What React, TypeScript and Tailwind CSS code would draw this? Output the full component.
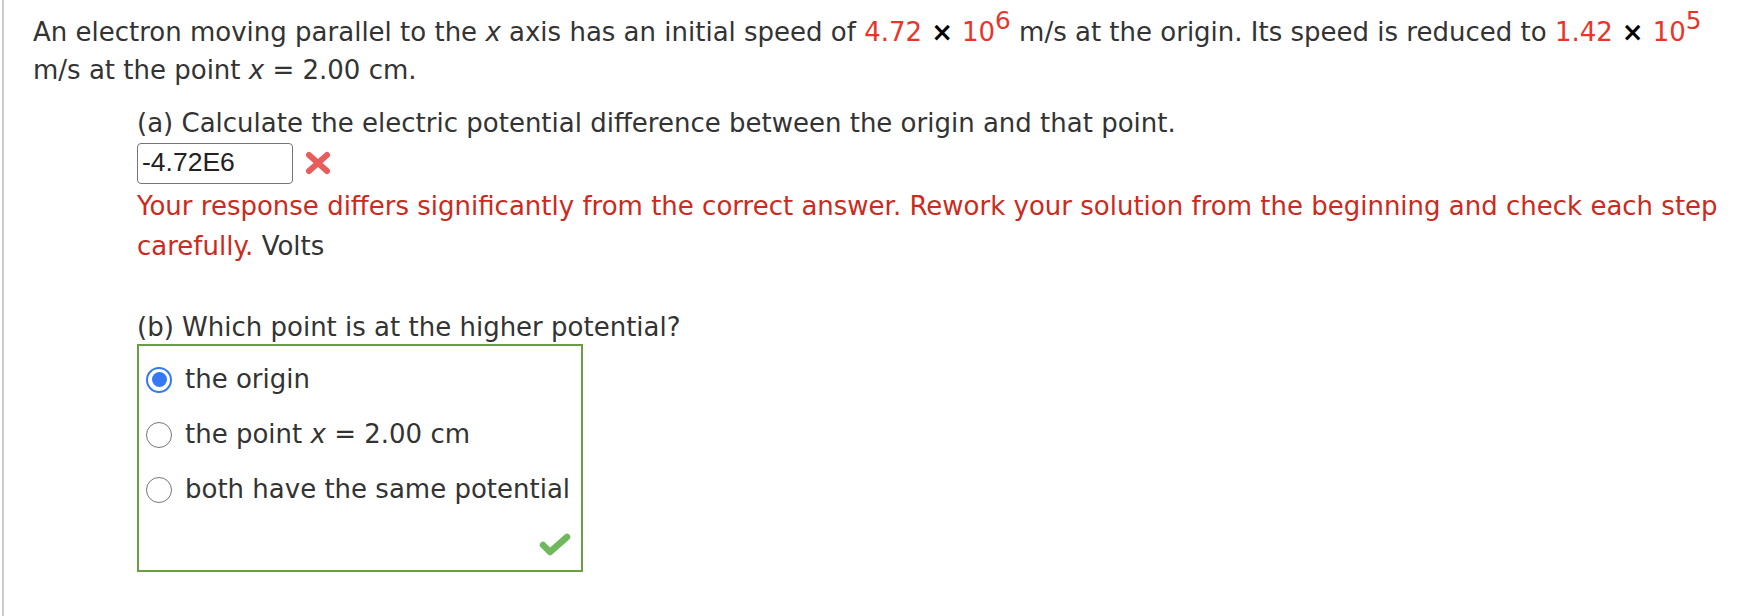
import React from "react";

const Times = () => <span className="text-black font-bold"> × </span>;

const Sci = ({ base, exp }: { base: string; exp: string }) => (
  <span className="text-[#e8352a]">
    {base}
    <Times />
    10<sup className="relative top-[-0.1em] text-[0.95em] align-super leading-none">{exp}</sup>
  </span>
);

const Radio = ({ checked }: { checked?: boolean }) =>
  checked ? (
    <span className="flex h-[26px] w-[26px] shrink-0 items-center justify-center rounded-full border-[2.5px] border-[#3478f6] bg-white">
      <span className="block h-[15px] w-[15px] rounded-full bg-[#3478f6]" />
    </span>
  ) : (
    <span className="block h-[26px] w-[26px] shrink-0 rounded-full border-[1.5px] border-[#767676] bg-white" />
  );

const WrongMark = () => (
  <svg width="30" height="24" viewBox="0 0 30 24" className="ml-[10px]">
    <path d="M6 4 L24 20 M24 4 L6 20" stroke="#e85c5c" strokeWidth="6" strokeLinecap="round" />
  </svg>
);

const RightMark = () => (
  <svg width="32" height="24" viewBox="0 0 32 24">
    <path d="M4 13 L11 20 L28 5" fill="none" stroke="#6fb85e" strokeWidth="6.5" strokeLinecap="round" strokeLinejoin="round" />
  </svg>
);

export default function App() {
  const options = [
    { label: <>the origin</>, checked: true },
    { label: <>the point <i>x</i> = 2.00 cm</> },
    { label: <>both have the same potential</> },
  ];

  return (
    <div className="h-[616px] w-[1748px] overflow-hidden bg-white">
      <div className="ml-[2px] h-full border-l-2 border-[#cccccc] font-['DejaVu_Sans','Verdana',sans-serif] text-[26px] text-[#333333]">
        <div className="pl-[29px] pt-[11px] leading-[40px] whitespace-nowrap">
          An electron moving parallel to the <i>x</i> axis has an initial speed of <Sci base="4.72" exp="6" /> m/s at the
          origin. Its speed is reduced to <Sci base="1.42" exp="5" />
          <br />
          <span className="relative top-[-2px]">
            m/s at the point <i>x</i> = 2.00 cm.
          </span>
        </div>

        <div className="pl-[133px] pt-[11px]">
          <div className="leading-[40px]">(a) Calculate the electric potential difference between the origin and that point.</div>
          <div className="flex items-center">
            <div className="flex h-[41px] w-[156px] items-center rounded-[4px] border-[1.5px] border-[#767676] px-[4px] font-['Liberation_Sans',Arial,sans-serif] text-[26.5px] text-[#222]">
              -4.72E6
            </div>
            <WrongMark />
          </div>
          <div className="mt-[2px] leading-[40px] text-[#cc2a20] whitespace-nowrap">
            Your response differs significantly from the correct answer. Rework your solution from the beginning and check each step
            <br />
            carefully. <span className="text-[#333333]">Volts</span>
          </div>

          <div className="mt-[41px] leading-[40px]">(b) Which point is at the higher potential?</div>
          <div className="mt-[-3px] flex h-[228px] w-[446px] flex-col border-2 border-[#6a9e42] pl-[7px] pr-[10px] pt-[20px]">
            {options.map((o, i) => (
              <div key={i} className="flex h-[56px] items-start gap-[13px]">
                <span className="mt-[1px]">
                  <Radio checked={o.checked} />
                </span>
                <span className="leading-[26px] whitespace-nowrap">{o.label}</span>
              </div>
            ))}
            <div className="mt-auto mb-[14px] flex justify-end">
              <RightMark />
            </div>
          </div>
        </div>
      </div>
    </div>
  );
}
